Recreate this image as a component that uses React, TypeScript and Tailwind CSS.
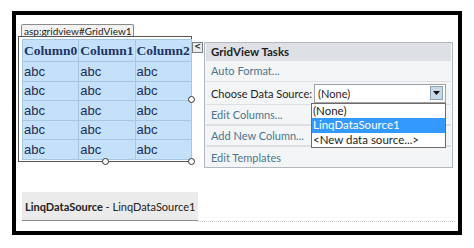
import React from "react";

const columns = ["Column0", "Column1", "Column2"];
const rows = [0, 1, 2, 3, 4];

const tasks = ["Edit Columns...", "Add New Column...", "Edit Templates"];

// small resize handle on the selection border
const Handle = ({ className }: { className: string }) => (
  <span
    className={`absolute h-[7px] w-[7px] rounded-full border border-[#333] bg-white ${className}`}
  />
);

const GridViewBox = () => (
  <div className="flex flex-col">
    {/* tag */}
    <div className="ml-[3px] flex h-[12px] w-[113px] items-center rounded-t-[2px] border border-b-0 border-[#8a8a8a] bg-[#f2f2f2] px-[2px] text-[10px] leading-none whitespace-nowrap text-[#222]">
      asp:gridview#GridView1
    </div>
    <div className="relative h-[126px] w-[174px] border border-[#555] bg-white px-[3px] pt-[2px]">
      <table className="w-[165px] border-collapse bg-[#c5e1fa]">
        <thead>
          <tr className="h-[22px]">
            {columns.map((c) => (
              <th
                key={c}
                className="w-[55px] border border-[#a7c6df] px-[1px] text-left font-['Liberation_Serif',serif] text-[13.5px] font-bold leading-none text-[#1d3566]"
              >
                {c}
              </th>
            ))}
          </tr>
        </thead>
        <tbody>
          {rows.map((r) => (
            <tr key={r} className="h-[19.5px]">
              {columns.map((c) => (
                <td
                  key={c}
                  className="border border-[#a7c6df] px-[1px] font-['Liberation_Sans',sans-serif] text-[13px] leading-none text-[#1c2d52]"
                >
                  abc
                </td>
              ))}
            </tr>
          ))}
        </tbody>
      </table>
      <Handle className="right-[-4px] top-[59px]" />
      <Handle className="bottom-[-4px] left-[83px]" />
      <Handle className="bottom-[-4px] right-[-4px]" />
    </div>
  </div>
);

const TasksPanel = () => (
  <div className="mt-[18px] flex items-start">
    <div className="flex h-[11px] w-[11px] items-center justify-center border border-[#7a7a7a] bg-[#ececec] pb-[1px] font-['DejaVu_Sans',sans-serif] text-[8px] font-bold leading-none text-[#222]">
      &lt;
    </div>
    <div className="ml-[1px] flex h-[126px] w-[249px] flex-col border border-[#b3b8bf] bg-[#f4f5f7] px-[1px] font-['Lato',sans-serif] text-[11px] leading-none whitespace-nowrap">
      <div className="flex h-[18px] items-center bg-[#dde1e6] px-[5px] text-[11.5px] font-bold text-[#1e1e1e]">
        GridView Tasks
      </div>
      <div className="flex h-[21px] items-center border-b border-[#dcdfe3] px-[5px] text-[#4a7590]">
        Auto Format...
      </div>
      <div className="relative flex h-[23px] items-center px-[5px] text-[#1e1e1e]">
        <span className="w-[104px]">Choose Data Source:</span>
        <div className="flex h-[19px] w-[133px] items-center justify-between border border-[#a3a3a3] bg-white pl-[3px] pr-[2px]">
          <span>(None)</span>
          <span className="flex h-[14px] w-[13px] items-center justify-center border border-[#8fa3b5] bg-[#c9d8e6]">
            <svg width="7" height="4" viewBox="0 0 7 4">
              <path d="M0 0h7L3.5 4z" fill="#111" />
            </svg>
          </span>
        </div>
        {/* open dropdown list */}
        <div className="absolute left-[105px] top-[21px] z-10 flex w-[135px] flex-col border border-[#6b6b6b] bg-white text-[11.5px] text-[#1e1e1e]">
          <div className="flex h-[14px] items-center px-[1px]">(None)</div>
          <div className="flex h-[15px] items-center bg-[#3399ff] px-[1px] text-white">
            LinqDataSource1
          </div>
          <div className="flex h-[14px] items-center px-[1px]">
            &lt;New data source...&gt;
          </div>
        </div>
      </div>
      {tasks.map((t, i) => (
        <div
          key={t}
          className={`flex h-[21px] items-center border-t border-[#dcdfe3] px-[5px] text-[#4a7590] ${
            i < tasks.length - 1 ? "border-b" : ""
          }`}
        >
          {t}
        </div>
      ))}
    </div>
  </div>
);

export default function App() {
  return (
    <div className="h-[248px] w-[474px] bg-white pl-[12px] pt-[11px] font-['Lato',sans-serif]">
      <div className="h-[224px] w-[450px] border-4 border-black bg-white">
        <div className="flex items-start pl-[2px] pt-[9px]">
          <GridViewBox />
          <TasksPanel />
        </div>
        <div className="mt-[24px] flex items-end">
          <div className="ml-[6px] flex h-[29px] w-[176px] items-center border-b border-[#8c8c8c] bg-[#ebebeb] px-[3px] text-[11px] leading-none whitespace-nowrap text-[#222]">
            <span className="font-bold">LinqDataSource</span>
            <span>&nbsp;- LinqDataSource1</span>
          </div>
          <div className="mb-[-1px] h-0 w-[257px] border-b border-dotted border-[#c4c4c4]" />
        </div>
      </div>
    </div>
  );
}
